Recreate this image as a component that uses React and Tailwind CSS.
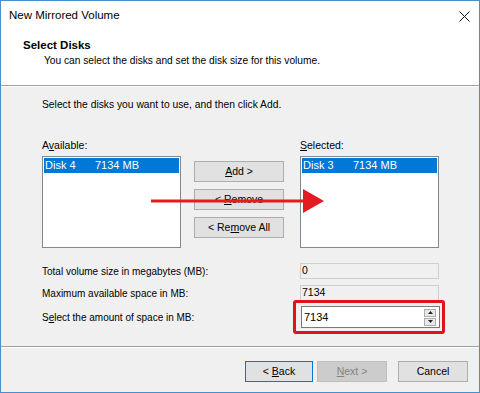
import React from "react";

const font = { fontFamily: '"Liberation Sans", Arial, sans-serif' };

function Btn({ children, className = "" }) {
  return (
    <div
      className={`flex h-[21px] items-center justify-center border text-[10.5px] leading-none ${className}`}
    >
      <span className="whitespace-pre">{children}</span>
    </div>
  );
}

function ListBox({ disk }) {
  return (
    <div className="h-[92px] w-[139px] border border-[#828790] bg-white p-px">
      <div className="flex h-[15px] items-center bg-[#0078d7] pl-[1px] text-[11px] text-white">
        <span className="w-[50px]">{disk}</span>
        <span>7134 MB</span>
      </div>
    </div>
  );
}

export default function App() {
  return (
    <div
      style={font}
      className="relative flex h-[393px] w-[480px] flex-col border border-[#4a8fca] bg-[#f0f0f0] text-[#000]"
    >
      <div className="h-[84px] bg-white">
        <div className="flex h-[30px] items-center justify-between pl-[8px] pr-[9px] text-[11.5px]">
          <span>New Mirrored Volume</span>
          <svg width="11" height="11" viewBox="0 0 11 11">
            <path d="M0.5 0.5 L10.5 10.5 M10.5 0.5 L0.5 10.5" stroke="#111" strokeWidth="1" />
          </svg>
        </div>
        <div className="mt-[6px] pl-[22px] text-[11.5px] font-bold leading-[16px]">Select Disks</div>
        <div className="pl-[43px] text-[10.2px] leading-[16px]">
          You can select the disks and set the disk size for this volume.
        </div>
      </div>
      <div className="h-[2px] border-t border-b border-t-[#a0a0a0] border-b-white" />

      <div className="flex flex-1 flex-col pl-[41px] pt-[10px] text-[10.5px]">
        <div className="text-[10.3px] leading-[16px]">Select the disks you want to use, and then click Add.</div>

        <div className="mt-[24px] flex">
          <div className="flex flex-col">
            <div className="leading-[16px]">
              A<u>v</u>ailable:
            </div>
            <div className="mt-[3px]">
              <ListBox disk="Disk 4" />
            </div>
          </div>
          <div className="ml-[13px] mt-[24px] flex w-[90px] flex-col gap-[7px]">
            <Btn className="border-[#adadad] bg-[#e1e1e1]">
              <u>A</u>dd &gt;
            </Btn>
            <Btn className="border-[#adadad] bg-[#e1e1e1]">
              {"< "}<u>R</u>emove
            </Btn>
            <Btn className="border-[#adadad] bg-[#e1e1e1]">
              {"< Re"}<u>m</u>ove All
            </Btn>
          </div>
          <div className="ml-[16px] flex flex-col">
            <div className="leading-[16px]">
              <u>S</u>elected:
            </div>
            <div className="mt-[3px]">
              <ListBox disk="Disk 3" />
            </div>
          </div>
        </div>

        <div className="mt-[15px] flex flex-col">
          <div className="flex h-[16px] items-center">
            <span className="w-[258px] text-[10px]">Total volume size in megabytes (MB):</span>
            <div className="flex h-[16px] w-[139px] items-center border border-[#cfcfcf] bg-[#f0f0f0] pl-[1px]">0</div>
          </div>
          <div className="mt-[6px] flex h-[16px] items-center">
            <span className="w-[258px] text-[10px]">Maximum available space in MB:</span>
            <div className="flex h-[16px] w-[139px] items-center border border-[#cfcfcf] bg-[#f0f0f0] pl-[1px]">7134</div>
          </div>
          <div className="mt-[5px] flex h-[22px] items-center">
            <span className="w-[259px] text-[10px]">
              S<u>e</u>lect the amount of space in MB:
            </span>
            <div className="flex h-[22px] w-[139px] items-center justify-between border border-[#7a7a7a] bg-white pl-[2px] pr-[3px] text-[11px]">
              <span>7134</span>
              <div className="flex flex-col gap-px">
                <div className="flex h-[8px] w-[12px] items-center justify-center border border-[#adadad] bg-[#e8e8e8]">
                  <svg width="5" height="3" viewBox="0 0 5 3"><path d="M2.5 0 L5 3 L0 3 Z" fill="#222" /></svg>
                </div>
                <div className="flex h-[8px] w-[12px] items-center justify-center border border-[#adadad] bg-[#e8e8e8]">
                  <svg width="5" height="3" viewBox="0 0 5 3"><path d="M0 0 L5 0 L2.5 3 Z" fill="#222" /></svg>
                </div>
              </div>
            </div>
          </div>
        </div>
      </div>

      <div className="h-[2px] border-t border-b border-t-[#a0a0a0] border-b-white" />
      <div className="flex h-[44px] items-start justify-end gap-[4px] pr-[11px] pt-[13px]">
        <Btn className="w-[68px] border-[#0078d7] bg-[#e1e1e1]">
          {"< "}<u>B</u>ack
        </Btn>
        <Btn className="w-[70px] border-[#bfbfbf] bg-[#cccccc] text-[#838383]">
          <u>N</u>ext &gt;
        </Btn>
        <Btn className="ml-[7px] w-[70px] border-[#adadad] bg-[#e1e1e1]">Cancel</Btn>
      </div>

      <div className="absolute left-[292px] top-[299px] h-[34px] w-[152px] rounded-[3px] border-[3px] border-[#e0121c]" />
      <svg className="absolute left-[150px] top-[187px]" width="175" height="26" viewBox="0 0 175 26">
        <path d="M0 13 L153 13" stroke="#e31b23" strokeWidth="3" />
        <path d="M152 1 L173 13 L152 25 Z" fill="#e31b23" />
      </svg>
    </div>
  );
}
